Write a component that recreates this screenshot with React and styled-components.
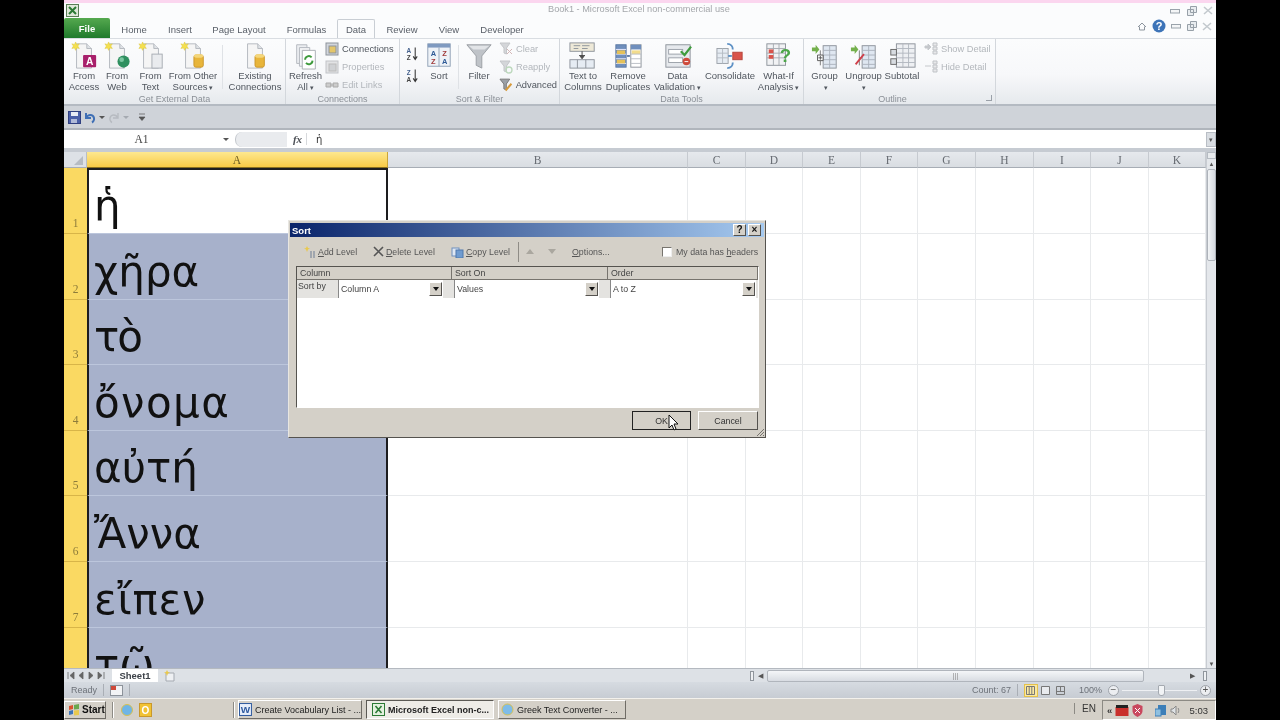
import React from 'react'
import styled, { createGlobalStyle } from 'styled-components'

const GlobalStyle = createGlobalStyle`
  html, body { margin: 0; padding: 0; background: #000; overflow: hidden; }
  * { box-sizing: border-box; }
`

const UI = `"Liberation Sans", Arial, sans-serif`
const SERIF = `"Liberation Serif", serif`

const Frame = styled.div`
  position: relative;
  width: 1152px;
  height: 720px;
  margin-left: 64px;
  background: #f5f7f9;
  display: flex;
  flex-direction: column;
  font-family: ${UI};
  font-size: 10px;
  color: #4b5159;
  overflow: hidden;
  filter: blur(0.45px);
`

const TitleBar = styled.div`
  height: 18px;
  flex: none;
  display: flex;
  align-items: center;
  justify-content: space-between;
  padding: 0 2px;
  background: #fbfcfd;
  border-top: 3px solid #fbd6ef;
`

const TitleText = styled.span`
  position: absolute;
  left: 484px;
  top: 4px;
  font-size: 9.2px;
  color: #a4a7ab;
`

const WinButtons = styled.div`
  display: flex;
  align-items: center;
  gap: ${p => p.$gap || 5}px;
  padding-right: ${p => p.$pr || 1}px;
`

const TabRow = styled.div`
  height: 20px;
  flex: none;
  display: flex;
  align-items: flex-end;
  background: #fbfcfd;
  position: relative;
`

const FileTab = styled.div`
  width: 46px;
  height: 20px;
  background: linear-gradient(#55a94f, #1f7a2c);
  color: #fff;
  font-weight: bold;
  font-size: 9.5px;
  border-radius: 2px 2px 0 0;
  display: flex;
  align-items: center;
  justify-content: center;
`

const Tab = styled.div`
  width: ${p => p.$w}px;
  height: ${p => (p.$active ? 19 : 18)}px;
  display: flex;
  align-items: center;
  justify-content: center;
  font-size: 9.5px;
  color: #5a6069;
  ${p => p.$active && `
    background: #fbfcfd;
    border: 1px solid #c9ced4;
    border-bottom: none;
    border-radius: 2px 2px 0 0;
  `}
`

const TabTools = styled.div`
  position: absolute;
  right: 2px;
  top: 1px;
  display: flex;
  align-items: center;
`

const Ribbon = styled.div`
  height: 68px;
  flex: none;
  display: flex;
  background: linear-gradient(#fbfcfd 0%, #f7f8fa 55%, #e6e9ed 100%);
  border-top: 1px solid #d9dde2;
  border-bottom: 2px solid #b4bac2;
`

const Group = styled.div`
  width: ${p => p.$w}px;
  flex: none;
  position: relative;
  display: flex;
  flex-direction: column;
  border-right: 1px solid #d3d7dc;
`

const GroupBody = styled.div`
  height: 55px;
  display: flex;
  padding-left: ${p => p.$pl || 0}px;
`

const GroupLabel = styled.div`
  font-size: 9px;
  line-height: 10px;
  color: #8b9097;
  text-align: center;
  padding-right: ${p => p.$pr || 0}px;
`

const Launcher = styled.span`
  position: absolute;
  right: 3px;
  bottom: 3px;
  width: 6px;
  height: 6px;
  border-right: 1px solid #9aa0a8;
  border-bottom: 1px solid #9aa0a8;
`

const BigButton = styled.div`
  width: ${p => p.$w}px;
  flex: none;
  display: flex;
  flex-direction: column;
  align-items: center;
  padding-top: 2px;
  color: #50565e;

  svg { width: 28px; height: 29px; flex: none; margin-bottom: 1px; }
`

const BigLabel = styled.div`
  font-size: 9.5px;
  line-height: 10.5px;
  text-align: center;
  white-space: nowrap;
`

const DropGlyph = styled.span`
  font-size: 7px;
  margin-left: 2px;
`

const VSep = styled.span`
  width: 1px;
  flex: none;
  height: ${p => p.$h || 44}px;
  margin: ${p => p.$m || '6px 3px 0'};
  background: #dfe2e6;
`

const SmallColumn = styled.div`
  width: ${p => p.$w}px;
  flex: none;
  display: flex;
  flex-direction: column;
  gap: ${p => p.$gap || 0}px;
  padding: ${p => p.$pt || 1}px 0 0 ${p => p.$pl || 0}px;
`

const SmallButton = styled.div`
  height: 18px;
  display: flex;
  align-items: center;
  gap: 3px;
  font-size: 9.3px;
  white-space: nowrap;
  color: ${p => (p.$off ? '#b3b7bc' : '#50565e')};
`

const Qat = styled.div`
  height: 24px;
  flex: none;
  display: flex;
  align-items: center;
  gap: 2px;
  padding-left: 4px;
  background: #cfd3d9;
  border-bottom: 2px solid #b0b5bc;
`

const QatSpace = styled.span`
  width: 5px;
`

const FormulaBar = styled.div`
  height: 18px;
  flex: none;
  display: flex;
  align-items: center;
  background: #fff;
`

const NameBox = styled.div`
  width: 155px;
  font-family: ${SERIF};
  font-size: 11.5px;
  color: #444;
  text-align: center;
`

const NameArrow = styled.span`
  width: 0;
  height: 0;
  margin-left: 4px;
  border: 3px solid transparent;
  border-top: 3px solid #555;
  border-bottom: none;
`

const Bubble = styled.div`
  width: 52px;
  height: 15px;
  margin-left: 6px;
  background: #e9ebee;
  border-left: 1px solid #c2c6cb;
  border-radius: 7px 0 0 7px;
`

const Fx = styled.span`
  font-family: ${SERIF};
  font-style: italic;
  font-weight: bold;
  font-size: 11px;
  color: #4b4f55;
  width: 18px;
  margin-left: 2px;
  text-align: center;
  border-right: 1px solid #d7d9dc;
`

const FormulaValue = styled.div`
  flex: 1;
  padding-left: 9px;
  font-family: "DejaVu Sans", sans-serif;
  font-size: 10px;
  color: #333;
`

const Expand = styled.div`
  width: 10px;
  height: 15px;
  background: #d9dde2;
  border: 1px solid #b9bec5;
  color: #555;
  font-size: 7px;
  line-height: 13px;
  text-align: center;
`

const Gap = styled.div`
  height: 4px;
  flex: none;
  background: #c6cbd2;
`

const Sheet = styled.div`
  height: 516px;
  flex: none;
  display: flex;
`

const Grid = styled.div`
  width: 1142px;
  flex: none;
  display: grid;
  grid-template-columns: 23px 301px 300px 58px 57px 58px 57px 58px 58px 57px 58px 57px;
  grid-template-rows: 16px 66px repeat(7, 65.6px);
  overflow: hidden;
  height: 516px;
`

const Corner = styled.div`
  background: #dde1e6;
  border-right: 1px solid #b9bec5;
  border-bottom: 1px solid #a7adb5;
  position: relative;

  &::after {
    content: '';
    position: absolute;
    right: 3px;
    bottom: 2px;
    border-left: 9px solid transparent;
    border-bottom: 9px solid #b6bcc3;
  }
`

const ColHead = styled.div`
  font-family: ${SERIF};
  font-size: 11.5px;
  display: flex;
  align-items: center;
  justify-content: center;
  color: ${p => (p.$on ? '#6a5a20' : '#666b72')};
  background: ${p => (p.$on ? 'linear-gradient(#fde88f, #f8ca46)' : 'linear-gradient(#e6e9ed, #d9dde2)')};
  border-right: 1px solid ${p => (p.$on ? '#c9a53a' : '#c6cad0')};
  border-bottom: 1px solid ${p => (p.$on ? '#8a7020' : '#a7adb5')};
`

const RowHead = styled.div`
  font-family: ${SERIF};
  font-size: 11.5px;
  color: #8d7c3a;
  background: #fad962;
  border-bottom: 1px solid #d8b548;
  display: flex;
  align-items: flex-end;
  justify-content: center;
  padding-bottom: 4px;
`

const Cell = styled.div`
  background: #fff;
  border-right: 1px solid #e8eaec;
  border-bottom: 1px solid #e8eaec;
`

const WordCell = styled.div`
  background: ${p => (p.$active ? '#fff' : '#a7b1cb')};
  border-left: 2px solid #1d1d1f;
  border-right: 2px solid #1d1d1f;
  border-top: ${p => (p.$active ? '2px solid #1d1d1f' : 'none')};
  border-bottom: 1px solid #bcc6dc;
  padding: 0 0 2px 5px;
  font-family: "DejaVu Sans", sans-serif;
  font-size: 42px;
  line-height: 50px;
  letter-spacing: ${p => p.$ls || 0}px;
  color: #111;
  display: flex;
  align-items: flex-end;
  white-space: nowrap;
`

const VScroll = styled.div`
  width: 10px;
  flex: none;
  display: flex;
  flex-direction: column;
  background: #e4e7eb;
  border-left: 1px solid #c8ccd2;
`

const ScrollBtn = styled.div`
  height: ${p => p.$h || 9}px;
  flex: none;
  display: flex;
  align-items: center;
  justify-content: center;
  color: #555;
  font-size: 6px;
  background: ${p => p.$bg || 'transparent'};
  border: ${p => (p.$bg ? '1px solid #b5bbc2' : 'none')};
`

const VThumb = styled.div`
  height: 92px;
  flex: none;
  margin-top: 1px;
  background: linear-gradient(90deg, #f2f4f6, #d6dae0);
  border: 1px solid #aeb3ba;
  border-radius: 2px;
`

const ScrollRest = styled.div`
  flex: 1;
`

const SheetBar = styled.div`
  height: 14px;
  flex: none;
  display: flex;
  align-items: center;
  background: #dde1e6;
  border-top: 1px solid #b4b9c0;
  position: relative;
`

const SheetTab = styled.div`
  width: 46px;
  height: 13px;
  margin-right: 5px;
  background: #fff;
  text-align: center;
  font-size: 9.5px;
  line-height: 13px;
  font-weight: bold;
  color: #3d4249;
`

const NavArrows = styled.svg`
  margin: 0 7px 0 3px;
  flex: none;
`

const HScroll = styled.div`
  position: absolute;
  left: 686px;
  right: 10px;
  top: 0;
  height: 13px;
  display: flex;
  align-items: center;
  color: #555;
  font-size: 7px;
`

const ArrowSlot = styled.span`
  margin: 0 4px;
`

const Split = styled.span`
  width: 4px;
  height: 10px;
  flex: none;
  background: #eef0f3;
  border: 1px solid #8f959c;
`

const HThumb = styled.div`
  width: 377px;
  height: 12px;
  flex: none;
  margin: 0 46px 0 0;
  border: 1px solid #b0b5bc;
  border-radius: 2px;
  background: linear-gradient(#f4f6f8, #d8dce2);
  display: flex;
  align-items: center;
  justify-content: center;
  font-size: 7px;
  color: #888;
`

const StatusBar = styled.div`
  height: 16px;
  flex: none;
  display: flex;
  align-items: center;
  padding-left: 7px;
  background: linear-gradient(#d6dbe1, #c7ccd3);
  font-size: 9px;
  color: #6d7279;
  position: relative;
`

const StatusSep = styled.span`
  width: 1px;
  height: 12px;
  background: #a9aeb5;
  margin: 0 ${p => p.$m || 6}px;
`

const StatusRight = styled.div`
  position: absolute;
  right: 5px;
  top: 0;
  height: 16px;
  display: flex;
  align-items: center;
`

const ViewBtn = styled.span`
  width: 14px;
  height: 13px;
  margin-right: 1px;
  display: flex;
  align-items: center;
  justify-content: center;
  background: ${p => (p.$on ? '#fbe9a0' : 'transparent')};
  border: 1px solid ${p => (p.$on ? '#e5c24a' : 'transparent')};
`

const ZoomValue = styled.span`
  margin: 0 6px 0 10px;
`

const ZoomTrack = styled.div`
  width: 75px;
  height: 1px;
  background: #eef0f3;
  margin: 0 3px;
  position: relative;
`

const ZoomThumb = styled.span`
  position: absolute;
  left: 36px;
  top: -5px;
  width: 7px;
  height: 11px;
  border-radius: 1px 1px 3px 3px;
  background: #f2f4f6;
  border: 1px solid #a4a9b0;
`

const ZoomBtn = styled.span`
  width: 11px;
  height: 11px;
  border-radius: 50%;
  background: #eceef1;
  border: 1px solid #9ea3aa;
  display: flex;
  align-items: center;
  justify-content: center;
  font-size: 10px;
  line-height: 8px;
  color: #555;
`

const Taskbar = styled.div`
  height: 22px;
  flex: none;
  display: flex;
  align-items: center;
  background: #d4d0c8;
  border-top: 1px solid #f3f1ec;
  position: relative;
`

const StartBtn = styled.div`
  width: 42px;
  height: 18px;
  display: flex;
  align-items: center;
  gap: 2px;
  padding-left: 3px;
  font-weight: bold;
  font-size: 10px;
  color: #111;
  background: #d4d0c8;
  border: 1px solid;
  border-color: #fff #6f6c66 #6f6c66 #fff;
`

const TaskSep = styled.span`
  width: 2px;
  height: 16px;
  border-left: 1px solid #8c8a84;
  border-right: 1px solid #fff;
  margin: ${p => p.$m};
`

const QuickGap = styled.span`
  width: 5px;
`

const TaskBtn = styled.div`
  width: ${p => p.$w}px;
  height: 19px;
  flex: none;
  margin-right: 4px;
  display: flex;
  align-items: center;
  gap: 3px;
  padding-left: ${p => p.$pl || 0}px;
  font-size: 9px;
  white-space: nowrap;
  color: #222;
  font-weight: ${p => (p.$on ? 'bold' : 'normal')};
  background: ${p => (p.$on ? '#eeece7' : '#d4d0c8')};
  border: 1px solid;
  border-color: ${p => (p.$on ? '#5b5954 #fff #fff #5b5954' : '#fff #6f6c66 #6f6c66 #fff')};
`

const Tray = styled.div`
  position: absolute;
  right: 0;
  top: 1px;
  height: 20px;
  width: 114px;
  display: flex;
  align-items: center;
  padding-left: 4px;
  gap: 3px;
  border: 1px solid;
  border-color: #8c8a84 #fff #fff #8c8a84;
  font-size: 9.5px;
  color: #333;
`

const TraySpace = styled.span`
  width: 6px;
`

const Lang = styled.span`
  position: absolute;
  right: 120px;
  top: 4px;
  font-size: 10px;
  color: #333;
  padding-left: 7px;
  border-left: 1px solid #8c8a84;
`

const Clock = styled.span`
  margin-left: auto;
  padding-right: 7px;
`

/* sort dialog, floats over the sheet */
const Dialog = styled.div`
  position: absolute;
  left: 224px;
  top: 220px;
  width: 478px;
  height: 218px;
  display: flex;
  flex-direction: column;
  padding: 2px 6px 0 7px;
  background: #d4d0c8;
  border: 1px solid;
  border-color: #e8e6e1 #55534f #55534f #e8e6e1;
  color: #2c2c2c;
  font-size: 8.8px;
`

const DialogTitle = styled.div`
  height: 14px;
  flex: none;
  margin: 0 -5px 0 -6px;
  display: flex;
  align-items: center;
  justify-content: space-between;
  padding: 0 3px 0 2px;
  background: linear-gradient(90deg, #0a246a, #a6caf0);
  color: #fff;
  font-weight: bold;
  font-size: 9.5px;
`

const TitleBtns = styled.div`
  display: flex;
  gap: 2px;
`

const TitleBtn = styled.span`
  width: 13px;
  height: 12px;
  background: #d4d0c8;
  color: #111;
  border: 1px solid;
  border-color: #fff #55534f #55534f #fff;
  font-size: 10px;
  line-height: 10px;
  font-weight: bold;
  text-align: center;
`

const DialogTools = styled.div`
  height: 29px;
  flex: none;
  display: flex;
  align-items: center;
  color: #555;
`

const Tool = styled.div`
  width: ${p => p.$w}px;
  flex: none;
  display: flex;
  align-items: center;
  gap: 2px;
  padding-left: ${p => p.$pl || 0}px;
  white-space: nowrap;
`

const ToolSep = styled.span`
  width: 1px;
  height: 20px;
  flex: none;
  background: #8f8c86;
  margin-right: 7px;
`

const CheckBox = styled.span`
  width: 10px;
  height: 10px;
  flex: none;
  margin-right: 4px;
  background: #fff;
  border: 1px solid;
  border-color: #77746e #eee #eee #77746e;
`

const SortList = styled.div`
  height: 142px;
  flex: none;
  display: flex;
  flex-direction: column;
  background: #fff;
  border: 1px solid;
  border-color: #55534f #fff #fff #55534f;
`

const ListHead = styled.div`
  height: 13px;
  flex: none;
  display: grid;
  grid-template-columns: 155px 156px 150px;
  background: #d4d0c8;
  border-bottom: 1px solid #77746e;
`

const HeadCell = styled.div`
  padding-left: 3px;
  line-height: 13px;
  color: #444;
  border-right: 1px solid #77746e;
`

const LevelRow = styled.div`
  height: 18px;
  flex: none;
  display: flex;
  background: #e4e3e0;
`

const RowLabel = styled.div`
  width: 41px;
  flex: none;
  padding-left: 1px;
  line-height: 12px;
  color: #444;
`

const Combo = styled.div`
  width: ${p => p.$w}px;
  margin-right: ${p => p.$mr || 0}px;
  flex: none;
  display: flex;
  align-items: center;
  justify-content: space-between;
  padding-left: 2px;
  background: #fff;
  border-left: 1px solid #888;
  color: #444;
`

const ComboArrow = styled.span`
  width: 13px;
  height: 14px;
  display: flex;
  align-items: center;
  justify-content: center;
  margin-right: 1px;
  background: #d4d0c8;
  border: 1px solid;
  border-color: #fff #55534f #55534f #fff;

  &::after {
    content: '';
    border: 3.5px solid transparent;
    border-top: 4px solid #111;
    border-bottom: none;
  }
`

const DialogActions = styled.div`
  flex: 1;
  display: flex;
  justify-content: flex-end;
  align-items: flex-start;
  gap: 7px;
  padding-top: 3px;
  padding-right: 1px;
`

const Button = styled.div`
  width: ${p => p.$w}px;
  height: 19px;
  display: flex;
  align-items: center;
  justify-content: center;
  color: #333;
  background: #d4d0c8;
  border: 1px solid;
  border-color: ${p => (p.$def ? '#222' : '#fff #55534f #55534f #fff')};
`

const Cursor = styled.svg`
  position: absolute;
  left: 379px;
  top: 193px;
`

const Grip = styled.svg`
  position: absolute;
  right: 0;
  bottom: 0;
`

const Key = styled.u`
  text-decoration: underline;
`

/* ---------- ribbon drawings ---------- */

const Star = () => <path d="M6 1l1.2 2.6L10 3l-1.6 2.4L10 8l-2.8-.6L6 10 4.800 7.400 2 8l1.600-2.600L2 3l2.800.6z" fill="#f5e04e" stroke="#d8c43a" strokeWidth=".5" />

const Page = ({ star = true, children }) => (
  <svg viewBox="0 0 30 31">
    <path d="M7 3h11l5 5v21H7z" fill="#f5f5f5" stroke="#b3b7bd" />
    <path d="M18 3v5h5" fill="#dfe2e6" stroke="#b3b7bd" />
    {star && <Star />}
    {children}
  </svg>
)

const AccessIcon = () => (
  <Page>
    <rect x="14" y="15" width="14" height="13" rx="1" fill="#a8206b" />
    <text x="21" y="26" fontSize="11" fontWeight="bold" fill="#fff" textAnchor="middle" fontFamily="Liberation Sans">A</text>
  </Page>
)
const WebIcon = () => (
  <Page>
    <circle cx="22" cy="22" r="6.500" fill="#2f8f5f" />
    <circle cx="20" cy="20" r="2.500" fill="#79c6a0" />
  </Page>
)
const TextFileIcon = () => (
  <Page>
    <rect x="16" y="14" width="11" height="15" fill="#e9ebee" stroke="#a6abb2" />
  </Page>
)
const DbIcon = ({ star = true, x = 16 }) => (
  <Page star={star}>
    <rect x={x} y="15" width="10" height="13" rx="2" fill="#e8b53a" stroke="#c9962a" />
    <ellipse cx={x + 5} cy="16" rx="5" ry="2" fill="#f4d67a" />
  </Page>
)

const RefreshIcon = () => (
  <svg viewBox="0 0 30 31">
    <path d="M5 4h11v20H5z" fill="#eceef1" stroke="#b3b7bd" />
    <path d="M8 7h11v20H8z" fill="#f3f4f6" stroke="#b3b7bd" />
    <path d="M11 10h14v20H11z" fill="#fff" stroke="#a9adb3" />
    <path d="M14 20a4 4 0 0 1 7-2.500M22 21a4 4 0 0 1-7 2.500" fill="none" stroke="#3e9a3c" strokeWidth="2" />
  </svg>
)

const SmallDoc = ({ off, kind }) => (
  <svg width="14" height="14" viewBox="0 0 14 14">
    {kind === 'links' ? (
      <path d="M1 5h5v4H1zM8 5h5v4H8zM5 7h4" fill="#ccc" stroke="#aaa" />
    ) : (
      <>
        <rect x="1" y="1" width="12" height="12" fill={off ? '#e2e3e5' : '#d2d6dc'} stroke={off ? '#c2c4c8' : '#8d939b'} />
        <rect x="4" y="4" width="7" height="7" fill={off ? '#cfd1d4' : '#e4c66a'} stroke={off ? '#bbb' : '#8d939b'} />
      </>
    )}
  </svg>
)

const AzSmall = ({ top, bottom }) => (
  <svg width="14" height="16" viewBox="0 0 16 20">
    <text x="4" y="9" fontSize="8" fontWeight="bold" fill="#44608c" textAnchor="middle" fontFamily="Liberation Sans">{top}</text>
    <text x="4" y="18" fontSize="8" fontWeight="bold" fill="#444" textAnchor="middle" fontFamily="Liberation Sans">{bottom}</text>
    <path d="M12 2v14M9.500 13l2.500 4 2.500-4" fill="none" stroke="#333" strokeWidth="1.300" />
  </svg>
)

const SortIcon = () => (
  <svg viewBox="0 0 30 31">
    <rect x="3" y="3" width="24" height="24" fill="#eef2f7" stroke="#8fa0b5" />
    <rect x="3" y="3" width="24" height="4" fill="#7f9ac0" />
    <path d="M15 7v20" stroke="#8fa0b5" />
    <text x="9" y="16" fontSize="8" fontWeight="bold" fill="#2f5a96" textAnchor="middle" fontFamily="Liberation Sans">A</text>
    <text x="9" y="25" fontSize="8" fontWeight="bold" fill="#a03a3a" textAnchor="middle" fontFamily="Liberation Sans">Z</text>
    <text x="21" y="16" fontSize="8" fontWeight="bold" fill="#a03a3a" textAnchor="middle" fontFamily="Liberation Sans">Z</text>
    <text x="21" y="25" fontSize="8" fontWeight="bold" fill="#2f5a96" textAnchor="middle" fontFamily="Liberation Sans">A</text>
  </svg>
)

const FunnelIcon = () => (
  <svg viewBox="0 0 30 31">
    <path d="M2 4h26L18 16v13l-6-3V16z" fill="#bfc3c8" stroke="#9a9ea4" />
    <path d="M4 5h22l-5 4H9z" fill="#e2e4e7" />
  </svg>
)

const FilterSmall = ({ off, variant }) => (
  <svg width="14" height="14" viewBox="0 0 14 14">
    <path d="M1 1h10L7.500 6v6L5 11V6z" fill={off ? '#d4d6d9' : '#9ba0a6'} stroke={off ? '#c4c6c9' : '#777'} />
    {variant === 'clear' && <path d="M8 7l5 5M13 7l-5 5" stroke="#d3b6b6" />}
    {variant === 'reapply' && <circle cx="10" cy="10" r="3" fill="none" stroke="#bcd8bc" strokeWidth="1.300" />}
    {variant === 'advanced' && <path d="M6 12l6-7 1.500 1.500-6 7z" fill="#d79a3a" />}
  </svg>
)

const ColumnsIcon = () => (
  <svg viewBox="0 0 30 31">
    <rect x="1" y="2" width="26" height="9" fill="#eee9d8" stroke="#8c929a" />
    <path d="M5 5h7M14 5h8M5 8h5M14 8h6" stroke="#8c929a" />
    <path d="M14 11v6M11 15l3 4 3-4" fill="#555" stroke="#444" />
    <rect x="1" y="20" width="26" height="9" fill="#e6ecf3" stroke="#8c929a" />
    <path d="M9 20v9M18 20v9" stroke="#8c929a" />
  </svg>
)

const DuplicatesIcon = () => (
  <svg viewBox="0 0 30 31">
    <rect x="2" y="4" width="11" height="24" fill="#6f8fbd" stroke="#5a78a4" />
    <path d="M2 9h11M2 14h11M2 19h11M2 24h11" stroke="#eef" />
    <rect x="3" y="10" width="9" height="4" fill="#e5c25a" />
    <rect x="3" y="20" width="9" height="4" fill="#e5c25a" />
    <rect x="18" y="4" width="11" height="24" fill="#fff" stroke="#8c929a" />
    <rect x="18" y="4" width="11" height="5" fill="#6f8fbd" />
    <rect x="19" y="10" width="9" height="4" fill="#f2dc8c" />
    <path d="M18 14h11M18 19h11M18 24h11" stroke="#b9bec5" />
    <path d="M14 16h3" stroke="#5a78a4" strokeWidth="2" />
  </svg>
)

const ValidationIcon = () => (
  <svg viewBox="0 0 30 31">
    <rect x="2" y="4" width="26" height="24" fill="#e6e9ed" stroke="#8c929a" />
    <rect x="5" y="9" width="15" height="5" fill="#fff" stroke="#9aa0a8" />
    <rect x="5" y="18" width="15" height="5" fill="#fff" stroke="#9aa0a8" />
    <path d="M18 11l4 4 7-9" fill="none" stroke="#3f9c3d" strokeWidth="2.300" />
    <circle cx="24" cy="22" r="4" fill="#cf4a3a" />
    <path d="M22 22h4" stroke="#fff" />
  </svg>
)

const ConsolidateIcon = () => (
  <svg viewBox="0 0 30 31">
    <rect x="1" y="8" width="12" height="16" fill="#e6ecf3" stroke="#9aa0a8" />
    <path d="M1 13h12M1 18h12M7 8v16" stroke="#b5bbc3" />
    <rect x="18" y="12" width="10" height="8" fill="#d9534a" stroke="#b5433a" />
    <path d="M12 3c4 0 6 3 6 6M12 29c4 0 6-3 6-6" fill="none" stroke="#5b8fc4" strokeWidth="2" />
    <path d="M13 16h4" stroke="#5b8fc4" strokeWidth="2" />
  </svg>
)

const WhatIfIcon = () => (
  <svg viewBox="0 0 30 31">
    <rect x="2" y="3" width="20" height="23" fill="#f1f2f4" stroke="#8c929a" />
    <path d="M2 8h20M2 13h20M2 18h20M9 3v23M15 3v23" stroke="#a6abb2" />
    <rect x="4" y="9" width="5" height="4" fill="#d9534a" />
    <rect x="4" y="15" width="5" height="4" fill="#d9534a" />
    <text x="22" y="23" fontSize="20" fontWeight="bold" fill="#4da64a" textAnchor="middle" fontFamily="Liberation Sans">?</text>
  </svg>
)

const OutlineIcon = ({ arrow, mark }) => (
  <svg viewBox="0 0 30 31">
    {arrow && <path d="M1 7h4V4l4 5-4 5v-3H1z" fill="#74b04c" />}
    <rect x="13" y="5" width="14" height="24" fill="#dfe7f1" stroke="#8c929a" />
    <path d="M13 10h14M13 15h14M13 20h14M13 25h14M20 5v24" stroke="#aab2bc" />
    <path d="M10 10v16M10 18h3" fill="none" stroke="#777" />
    {mark === 'plus' && <path d="M7 15h6v6H7zM10 16v4M8 18h4" fill="#fff" stroke="#555" />}
    {mark === 'cut' && <path d="M6 25L15 14" stroke="#cf3f4a" strokeWidth="2" />}
  </svg>
)

const SubtotalIcon = () => (
  <svg viewBox="0 0 30 31">
    <rect x="9" y="3" width="20" height="25" fill="#eef0f3" stroke="#8c929a" />
    <path d="M9 8h20M9 13h20M9 18h20M9 23h20M16 3v25M22 3v25" stroke="#b3b8bf" />
    <rect x="3" y="9" width="6" height="6" fill="#d8dce1" stroke="#666" />
    <rect x="3" y="19" width="6" height="6" fill="#d8dce1" stroke="#666" />
  </svg>
)

const DetailIcon = ({ plus }) => (
  <svg width="14" height="14" viewBox="0 0 14 14">
    <path d={plus ? 'M1 4h3V2l3 3-3 3V6H1z' : 'M1 6h6'} fill="#c5c8cc" stroke="#c5c8cc" />
    <path d="M9 1h4v3H9zM9 5h4v3H9zM9 9h4v3H9z" fill="#e7e8ea" stroke="#c0c3c7" />
  </svg>
)

const DropMark = () => <DropGlyph>▾</DropGlyph>

const WinIcons = () => (
  <>
    <svg width="11" height="8" viewBox="0 0 11 8"><rect x=".5" y="2.500" width="9" height="3.500" fill="#f4f6f7" stroke="#9aa3ab" /></svg>
    <svg width="10" height="10" viewBox="0 0 10 10"><path d="M3.500.5h6v6h-6zM.5 3.500h6v6h-6z" fill="#e8ecef" stroke="#97a0a8" /></svg>
    <svg width="10" height="9" viewBox="0 0 10 9"><path d="M1 1l8 7M9 1L1 8" stroke="#c3c9ce" strokeWidth="1.600" /></svg>
  </>
)

const rows = ['ἡ', 'χῆρα', 'τὸ', 'ὄνομα', 'αὐτή', 'Ἄννα', 'εἴπεν', 'τῶ']
const wordSpacing = { 'ὄνομα': 1.4, 'εἴπεν': 0.8, 'τὸ': -2 }
const otherCols = ['B', 'C', 'D', 'E', 'F', 'G', 'H', 'I', 'J', 'K']

function App() {
  return (
    <>
      <GlobalStyle />
      <Frame>
        <TitleBar>
          <svg width="13" height="13" viewBox="0 0 13 13">
            <rect x=".5" y=".5" width="12" height="12" fill="#dfe8d9" stroke="#5a7d56" />
            <path d="M3 3l7 7M10 3l-7 7" stroke="#2c7a35" strokeWidth="2" />
          </svg>
          <TitleText>Book1 - Microsoft Excel non-commercial use</TitleText>
          <WinButtons $gap={6}><WinIcons /></WinButtons>
        </TitleBar>

        <TabRow>
          <FileTab>File</FileTab>
          <Tab $w={48}>Home</Tab>
          <Tab $w={44}>Insert</Tab>
          <Tab $w={74}>Page Layout</Tab>
          <Tab $w={61}>Formulas</Tab>
          <Tab $w={38} $active>Data</Tab>
          <Tab $w={54}>Review</Tab>
          <Tab $w={40}>View</Tab>
          <Tab $w={66}>Developer</Tab>
          <TabTools>
            <WinButtons $gap={5} $pr={2}>
              <svg width="10" height="9" viewBox="0 0 10 9"><path d="M1 5l4-4 4 4M2.500 4.500V8h5V4.500" fill="none" stroke="#8d959e" /></svg>
              <svg width="14" height="14" viewBox="0 0 14 14">
                <circle cx="7" cy="7" r="6.500" fill="#3d74b8" />
                <text x="7" y="11" fontSize="11" fontWeight="bold" fill="#fff" textAnchor="middle" fontFamily="Liberation Sans">?</text>
              </svg>
              <WinIcons />
            </WinButtons>
          </TabTools>
        </TabRow>

        <Ribbon>
          <Group $w={222}>
            <GroupBody $pl={4}>
              <BigButton $w={32}><AccessIcon /><BigLabel>From<br />Access</BigLabel></BigButton>
              <BigButton $w={34}><WebIcon /><BigLabel>From<br />Web</BigLabel></BigButton>
              <BigButton $w={33}><TextFileIcon /><BigLabel>From<br />Text</BigLabel></BigButton>
              <BigButton $w={52}><DbIcon /><BigLabel>From Other<br />Sources<DropMark /></BigLabel></BigButton>
              <VSep />
              <BigButton $w={58}><DbIcon star={false} x={15} /><BigLabel>Existing<br />Connections</BigLabel></BigButton>
            </GroupBody>
            <GroupLabel>Get External Data</GroupLabel>
          </Group>

          <Group $w={114}>
            <GroupBody $pl={3}>
              <BigButton $w={33}><RefreshIcon /><BigLabel>Refresh<br />All<DropMark /></BigLabel></BigButton>
              <SmallColumn $w={72} $pl={3}>
                <SmallButton><SmallDoc />Connections</SmallButton>
                <SmallButton $off><SmallDoc off />Properties</SmallButton>
                <SmallButton $off><SmallDoc off kind="links" />Edit Links</SmallButton>
              </SmallColumn>
            </GroupBody>
            <GroupLabel>Connections</GroupLabel>
          </Group>

          <Group $w={160}>
            <GroupBody $pl={4}>
              <SmallColumn $w={20} $pt={7} $gap={6} $pl={1}>
                <AzSmall top="A" bottom="Z" />
                <AzSmall top="Z" bottom="A" />
              </SmallColumn>
              <BigButton $w={30}><SortIcon /><BigLabel>Sort</BigLabel></BigButton>
              <VSep $m="6px 4px 0" />
              <BigButton $w={32}><FunnelIcon /><BigLabel>Filter</BigLabel></BigButton>
              <SmallColumn $w={62} $pl={4}>
                <SmallButton $off><FilterSmall off variant="clear" />Clear</SmallButton>
                <SmallButton $off><FilterSmall off variant="reapply" />Reapply</SmallButton>
                <SmallButton><FilterSmall variant="advanced" />Advanced</SmallButton>
              </SmallColumn>
            </GroupBody>
            <GroupLabel>Sort &amp; Filter</GroupLabel>
          </Group>

          <Group $w={244}>
            <GroupBody $pl={1}>
              <BigButton $w={44}><ColumnsIcon /><BigLabel>Text to<br />Columns</BigLabel></BigButton>
              <BigButton $w={46}><DuplicatesIcon /><BigLabel>Remove<br />Duplicates</BigLabel></BigButton>
              <BigButton $w={53}><ValidationIcon /><BigLabel>Data<br />Validation<DropMark /></BigLabel></BigButton>
              <BigButton $w={52}><ConsolidateIcon /><BigLabel>Consolidate</BigLabel></BigButton>
              <BigButton $w={45}><WhatIfIcon /><BigLabel>What-If<br />Analysis<DropMark /></BigLabel></BigButton>
            </GroupBody>
            <GroupLabel>Data Tools</GroupLabel>
          </Group>

          <Group $w={192}>
            <GroupBody $pl={1}>
              <BigButton $w={39}><OutlineIcon arrow mark="plus" /><BigLabel>Group<br /><DropMark /></BigLabel></BigButton>
              <BigButton $w={39}><OutlineIcon arrow mark="cut" /><BigLabel>Ungroup<br /><DropMark /></BigLabel></BigButton>
              <BigButton $w={38}><SubtotalIcon /><BigLabel>Subtotal</BigLabel></BigButton>
              <SmallColumn $w={70} $pl={3}>
                <SmallButton $off><DetailIcon plus />Show Detail</SmallButton>
                <SmallButton $off><DetailIcon />Hide Detail</SmallButton>
              </SmallColumn>
            </GroupBody>
            <GroupLabel $pr={14}>Outline</GroupLabel>
            <Launcher />
          </Group>
        </Ribbon>

        <Qat>
          <svg width="13" height="13" viewBox="0 0 13 13">
            <rect x=".5" y=".5" width="12" height="12" fill="#4a5fa8" stroke="#2f3f80" />
            <rect x="3" y="1" width="7" height="4" fill="#e8ecf5" />
            <rect x="3" y="8" width="6" height="4" fill="#b0bad8" />
          </svg>
          <svg width="14" height="13" viewBox="0 0 14 13">
            <path d="M3 2v5h5M3 7c2-4 7-4 8 0 .5 2-1 4-2 4.500" fill="none" stroke="#3f6fb5" strokeWidth="2" />
          </svg>
          <svg width="6" height="13" viewBox="0 0 6 13"><path d="M0 5h6L3 8z" fill="#555" /></svg>
          <svg width="14" height="13" viewBox="0 0 14 13">
            <path d="M11 2v5H6M11 7C9 3 4 3 3 7c-.5 2 1 4 2 4.500" fill="none" stroke="#b7bbc1" strokeWidth="1.400" />
          </svg>
          <svg width="6" height="13" viewBox="0 0 6 13"><path d="M0 5h6L3 8z" fill="#a5aab1" /></svg>
          <QatSpace />
          <svg width="8" height="13" viewBox="0 0 8 13"><path d="M1 3h6M1 6h6L4 9.500z" fill="#555" stroke="#555" strokeWidth=".7" /></svg>
        </Qat>

        <FormulaBar>
          <NameBox>A1</NameBox>
          <NameArrow />
          <Bubble />
          <Fx>fx</Fx>
          <FormulaValue>ἡ</FormulaValue>
          <Expand>▾</Expand>
        </FormulaBar>
        <Gap />

        <Sheet>
          <Grid>
            <Corner />
            <ColHead $on>A</ColHead>
            {otherCols.map(c => <ColHead key={c}>{c}</ColHead>)}
            {rows.map((word, i) => (
              <React.Fragment key={word}>
                <RowHead>{i < 7 ? i + 1 : ''}</RowHead>
                <WordCell $active={i === 0} $ls={wordSpacing[word]}>{word}</WordCell>
                {otherCols.map(c => <Cell key={c} />)}
              </React.Fragment>
            ))}
          </Grid>
          <VScroll>
            <ScrollBtn $h={7} $bg="#e8ebee" />
            <ScrollBtn>▲</ScrollBtn>
            <VThumb />
            <ScrollRest />
            <ScrollBtn>▼</ScrollBtn>
          </VScroll>
        </Sheet>

        <SheetBar>
          <NavArrows width="38" height="9" viewBox="0 0 38 9">
            <path d="M1 1v7M7 1L3 4.500 7 8zM16 1l-4 3.500L16 8zM22 1l4 3.500L22 8zM31 1l4 3.500L31 8zM37 1v7" fill="#666" stroke="#666" strokeWidth=".8" />
          </NavArrows>
          <SheetTab>Sheet1</SheetTab>
          <svg width="14" height="12" viewBox="0 0 14 12">
            <path d="M3 3h8v8H3z" fill="#eef0f3" stroke="#a4a9b0" />
            <path d="M4 0l1 2 2 .5-2 1L4 6 3 3.500 1 2.500 3 2z" fill="#e9c94e" />
          </svg>
          <HScroll>
            <Split />
            <ArrowSlot>◀</ArrowSlot>
            <HThumb>|||</HThumb>
            <span>▶</span>
            <ArrowSlot />
            <Split />
          </HScroll>
        </SheetBar>

        <StatusBar>
          Ready
          <StatusSep />
          <svg width="13" height="12" viewBox="0 0 13 12">
            <rect x=".5" y="1.500" width="12" height="10" fill="#f2f3f5" stroke="#8c929a" />
            <rect x="1" y="2" width="5" height="4" fill="#cf4a3a" />
          </svg>
          <StatusSep />
          <StatusRight>
            <span>Count: 67</span>
            <StatusSep />
            <ViewBtn $on><svg width="9" height="9" viewBox="0 0 9 9"><path d="M.5.5h8v8h-8zM3.200.5v8M5.800.5v8" fill="none" stroke="#777" /></svg></ViewBtn>
            <ViewBtn><svg width="9" height="9" viewBox="0 0 9 9"><path d="M.5.5h8v8h-8z" fill="#e9ebee" stroke="#777" /></svg></ViewBtn>
            <ViewBtn><svg width="9" height="9" viewBox="0 0 9 9"><path d="M.5.5h8v8h-8zM4.500.5v5M.5 5.500h8" fill="none" stroke="#777" /></svg></ViewBtn>
            <ZoomValue>100%</ZoomValue>
            <ZoomBtn>−</ZoomBtn>
            <ZoomTrack><ZoomThumb /></ZoomTrack>
            <ZoomBtn>+</ZoomBtn>
          </StatusRight>
        </StatusBar>

        <Taskbar>
          <StartBtn>
            <svg width="12" height="12" viewBox="0 0 12 12">
              <path d="M1 2l4-1v4l-4 1z" fill="#d9532f" /><path d="M6 1l5-1v5l-5 .5z" fill="#6aa84f" />
              <path d="M1 7l4-1v4l-4 1z" fill="#3d74b8" /><path d="M6 6.500l5-.5v5l-5 .5z" fill="#e9c94e" />
            </svg>
            Start
          </StartBtn>
          <TaskSep $m="0 6px" />
          <svg width="14" height="14" viewBox="0 0 14 14"><circle cx="7" cy="7" r="5.500" fill="#6fb5e6" stroke="#d9c04e" /></svg>
          <QuickGap />
          <svg width="13" height="14" viewBox="0 0 13 14">
            <rect x=".5" y=".5" width="12" height="13" fill="#f1c232" stroke="#c9982a" />
            <text x="6.500" y="11" fontSize="10" fontWeight="bold" fill="#fff" textAnchor="middle" fontFamily="Liberation Sans">O</text>
          </svg>
          <TaskSep $m="0 3px 0 81px" />
          <TaskBtn $w={124}>
            <svg width="13" height="13" viewBox="0 0 13 13">
              <rect x=".5" y=".5" width="12" height="12" fill="#e7eefa" stroke="#2f5a9e" />
              <text x="6.500" y="10.500" fontSize="10" fontWeight="bold" fill="#2f5a9e" textAnchor="middle" fontFamily="Liberation Sans">W</text>
            </svg>
            Create Vocabulary List - ...
          </TaskBtn>
          <TaskBtn $w={128} $on $pl={5}>
            <svg width="13" height="13" viewBox="0 0 13 13">
              <rect x=".5" y=".5" width="12" height="12" fill="#e4f1df" stroke="#2c7a35" />
              <path d="M3.500 3l6 7M9.500 3l-6 7" stroke="#2c7a35" strokeWidth="1.600" />
            </svg>
            Microsoft Excel non-c...
          </TaskBtn>
          <TaskBtn $w={128} $pl={2}>
            <svg width="13" height="13" viewBox="0 0 13 13"><circle cx="6.500" cy="6.500" r="5.500" fill="#7fbce8" stroke="#d9c04e" /></svg>
            Greek Text Converter - ...
          </TaskBtn>
          <Lang>EN</Lang>
          <Tray>
            <b>«</b>
            <svg width="14" height="13" viewBox="0 0 14 13">
              <rect x=".5" y="3" width="13" height="9" fill="#c9302c" />
              <path d="M1 1h12v3H1z" fill="#222" />
            </svg>
            <svg width="11" height="13" viewBox="0 0 11 13">
              <path d="M5.500 0l5 2v5c0 3-3 5-5 6-2-1-5-3-5-6V2z" fill="#c9485e" />
              <path d="M3 4l5 5M8 4L3 9" stroke="#fff" />
            </svg>
            <TraySpace />
            <svg width="12" height="13" viewBox="0 0 12 13">
              <rect x="3" y="1" width="8" height="10" fill="#3d7fb8" />
              <rect x="0" y="5" width="6" height="7" fill="#8fc0e0" stroke="#3d7fb8" />
            </svg>
            <svg width="12" height="13" viewBox="0 0 12 13">
              <path d="M1 5h2l3-3v9L3 8H1z" fill="#dfe3e6" stroke="#888" />
              <path d="M8 4c1 1 1 4 0 5" fill="none" stroke="#888" />
            </svg>
            <Clock>5:03</Clock>
          </Tray>
        </Taskbar>

        <Dialog>
          <DialogTitle>
            Sort
            <TitleBtns>
              <TitleBtn>?</TitleBtn>
              <TitleBtn>×</TitleBtn>
            </TitleBtns>
          </DialogTitle>
          <DialogTools>
            <Tool $w={77} $pl={8}>
              <svg width="12" height="12" viewBox="0 0 12 12">
                <path d="M3 0l1 2 2 .5-2 1L3 6 2 3.500 0 2.500 2 2z" fill="#e9c94e" />
                <path d="M7 5v7M10 5v7" stroke="#6c7c94" />
              </svg>
              <span><Key>A</Key>dd Level</span>
            </Tool>
            <Tool $w={78}>
              <svg width="11" height="11" viewBox="0 0 11 11"><path d="M1 1l9 9M10 1l-9 9" stroke="#555" strokeWidth="1.600" /></svg>
              <span><Key>D</Key>elete Level</span>
            </Tool>
            <Tool $w={67}>
              <svg width="13" height="12" viewBox="0 0 13 12">
                <rect x="1" y="2" width="7" height="8" fill="#dfe7f3" stroke="#6f8fbd" />
                <rect x="5" y="4" width="7" height="8" fill="#6f9bd0" stroke="#4f78ad" />
              </svg>
              <span><Key>C</Key>opy Level</span>
            </Tool>
            <ToolSep />
            <Tool $w={22}><svg width="8" height="5" viewBox="0 0 8 5"><path d="M0 5l4-5 4 5z" fill="#aaa79f" /></svg></Tool>
            <Tool $w={24}><svg width="8" height="5" viewBox="0 0 8 5"><path d="M0 0l4 5 4-5z" fill="#aaa79f" /></svg></Tool>
            <Tool $w={90}><span><Key>O</Key>ptions...</span></Tool>
            <CheckBox />
            <span>My data has <Key>h</Key>eaders</span>
          </DialogTools>
          <SortList>
            <ListHead>
              <HeadCell>Column</HeadCell>
              <HeadCell>Sort On</HeadCell>
              <HeadCell>Order</HeadCell>
            </ListHead>
            <LevelRow>
              <RowLabel>Sort by</RowLabel>
              <Combo $w={105} $mr={11}>Column A<ComboArrow /></Combo>
              <Combo $w={145} $mr={11}>Values<ComboArrow /></Combo>
              <Combo $w={146}>A to Z<ComboArrow /></Combo>
            </LevelRow>
          </SortList>
          <DialogActions>
            <Button $w={59} $def>OK</Button>
            <Button $w={60}>Cancel</Button>
          </DialogActions>
          <Cursor width="12" height="18" viewBox="0 0 12 18">
            <path d="M1 1v13l3-3 2 5 2-1-2-5h4z" fill="#fff" stroke="#111" />
          </Cursor>
          <Grip width="10" height="10" viewBox="0 0 10 10">
            <path d="M9 2L2 9M9 5L5 9M9 8L8 9" stroke="#77746e" />
          </Grip>
        </Dialog>
      </Frame>
    </>
  )
}

export default App
